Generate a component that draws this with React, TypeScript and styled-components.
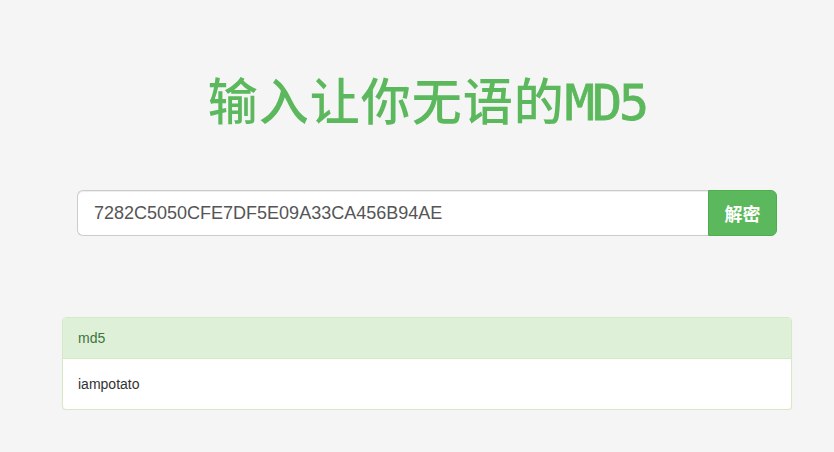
import React from "react";
import styled, { createGlobalStyle } from "styled-components";

const GlobalStyle = createGlobalStyle`
  html, body {
    margin: 0;
    padding: 0;
    background: #f5f5f5;
    font-family: "Liberation Sans", Arial, "Noto Sans CJK SC", sans-serif;
    font-size: 14px;
    color: #333;
  }
  * { box-sizing: border-box; }
`;

const Container = styled.div`
  width: 730px;
  margin-left: 62px;
  display: flex;
  flex-direction: column;
`;

const Title = styled.h1`
  margin: 76px 0 0;
  height: 55px;
  line-height: 55px;
  text-align: center;
  font-family: "DejaVu Sans Mono", "Noto Sans CJK SC", monospace;
  font-size: 50px;
  font-weight: 500;
  color: #5cb85c;
  letter-spacing: 1px;
`;

const Latin = styled.span`
  font-weight: 500;
  letter-spacing: -3px;
  -webkit-text-stroke: 0.8px #5cb85c;
`;

const InputGroup = styled.div`
  margin: 59px 15px 0;
  display: flex;
  height: 46px;
`;

const Field = styled.input`
  flex: 1;
  height: 46px;
  padding: 10px 16px;
  font-family: "Liberation Sans", Arial, sans-serif;
  font-size: 18px;
  color: #555;
  background: #fff;
  border: 1px solid #ccc;
  border-right: none;
  border-radius: 6px 0 0 6px;
  box-shadow: inset 0 1px 1px rgba(0, 0, 0, 0.075);
  outline: none;
`;

const Button = styled.button`
  width: 69px;
  height: 46px;
  padding: 0;
  font-family: "Liberation Sans", "Noto Sans CJK SC", sans-serif;
  font-size: 18px;
  font-weight: 700;
  color: #fff;
  background: #5cb85c;
  border: 1px solid #4cae4c;
  border-radius: 0 6px 6px 0;
  cursor: pointer;
`;

const Panel = styled.div`
  margin-top: 81px;
  background: #fff;
  border: 1px solid #d6e9c6;
  border-radius: 4px;
  box-shadow: 0 1px 1px rgba(0, 0, 0, 0.05);
  overflow: hidden;
`;

const PanelHeading = styled.div`
  padding: 10px 15px;
  line-height: 20px;
  color: #3c763d;
  background: #dff0d8;
  border-bottom: 1px solid #d6e9c6;
`;

const PanelBody = styled.div`
  padding: 15px;
  line-height: 20px;
  color: #333;
`;

export default function App() {
  return (
    <>
      <GlobalStyle />
      <Container>
        <Title>
          输入让你无语的<Latin>MD5</Latin>
        </Title>
        <InputGroup>
          <Field defaultValue="7282C5050CFE7DF5E09A33CA456B94AE" />
          <Button>解密</Button>
        </InputGroup>
        <Panel>
          <PanelHeading>md5</PanelHeading>
          <PanelBody>iampotato</PanelBody>
        </Panel>
      </Container>
    </>
  );
}
